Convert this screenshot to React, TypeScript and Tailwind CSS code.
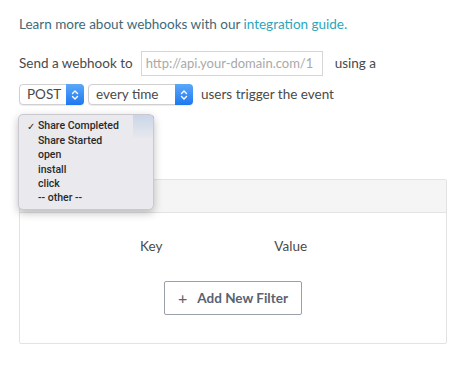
import React from "react";

function Arrows() {
  return (
    <svg width="8" height="12" viewBox="0 0 8 12" fill="none" stroke="white" strokeWidth="1.4" strokeLinecap="round" strokeLinejoin="round">
      <path d="M1.5 4.5 L4 2 L6.5 4.5" />
      <path d="M1.5 7.5 L4 10 L6.5 7.5" />
    </svg>
  );
}

function Select({ label, width }: { label: string; width: string }) {
  return (
    <div className={`relative flex h-[21px] ${width} flex-none items-center rounded-[4px] border border-[#cfcfcf] bg-white shadow-[0_1px_1px_rgba(0,0,0,0.08)]`}>
      <span className="flex-1 pl-[7px] text-[13.5px] text-[#4a4a4a]">{label}</span>
      <div className="flex h-[21px] w-[18px] -mr-px -my-px items-center justify-center rounded-r-[4px] bg-gradient-to-b from-[#5aa8f8] to-[#1c77f0]">
        <Arrows />
      </div>
    </div>
  );
}

export default function App() {
  const items = ["Share Completed", "Share Started", "open", "install", "click", "-- other --"];
  return (
    <div className="relative h-[366px] w-[474px] bg-white" style={{ fontFamily: "Lato, 'Open Sans', sans-serif" }}>
      <div className="px-[19px] pt-[14px]">
        <p className="text-[13.5px] leading-[20px] text-[#3e6a76]">
          Learn more about webhooks with our <span className="text-[#2ba6bc]">integration guide.</span>
        </p>
        <div className="mt-[17px] flex items-center text-[13.5px] text-[#4a4a4a]">
          <span className="flex-none">Send a webhook to</span>
          <div className="ml-[8px] flex h-[25px] w-[182px] flex-none items-center overflow-hidden whitespace-nowrap border border-[#d6d6d6] px-[4px] text-[13px] text-[#a9a9a9]">
            http://api.your-domain.com/1
          </div>
          <span className="ml-[12px] flex-none">using a</span>
        </div>
        <div className="mt-[8px] flex items-center gap-[4px] text-[13.5px] text-[#4a4a4a]">
          <Select label="POST" width="w-[65px]" />
          <Select label="every time" width="w-[105px]" />
          <span className="ml-[4px]">users trigger the event</span>
        </div>
        <div className="mt-[10px] h-[21px] w-[135px]">
          <Select label="" width="w-[135px]" />
        </div>
        <div className="mt-[43px] h-[165px] w-[428px] rounded-[2px] border border-[#e3e3e3]">
          <div className="h-[33px] border-b border-[#e3e3e3] bg-[#f5f5f5]" />
          <div className="flex pt-[23px] text-[13.5px] text-[#4a4a4a]">
            <span className="ml-[120px]">Key</span>
            <span className="ml-[112px]">Value</span>
          </div>
          <div className="mt-[25px] flex justify-center">
            <button className="flex h-[34px] w-[138px] items-center justify-center gap-[10px] rounded-[2px] border border-[#9aa0a8] text-[13.5px] font-bold text-[#5a6270]">
              <span className="text-[16px] font-normal">+</span>
              <span>Add New Filter</span>
            </button>
          </div>
        </div>
      </div>
      <div
        className="absolute left-[18px] top-[114px] w-[136px] overflow-hidden rounded-[5px] border border-[#c9c9cf] bg-[#e9e9ee] py-[4px] shadow-[0_3px_8px_rgba(0,0,0,0.25)]"
        style={{ fontFamily: "Roboto, 'Liberation Sans', Arial, sans-serif" }}
      >
        <div className="absolute right-0 top-0 h-[24px] w-[20px] bg-gradient-to-b from-[#c9d6e8] to-[#e9e9ee]" />
        {items.map((it, i) => (
          <div key={it} className="relative flex h-[14.4px] items-center pl-[19px] text-[10.5px] font-medium text-[#2a2a2a]">
            {i === 0 && <span className="absolute left-[8px] text-[10px] font-normal">✓</span>}
            {it}
          </div>
        ))}
      </div>
    </div>
  );
}
